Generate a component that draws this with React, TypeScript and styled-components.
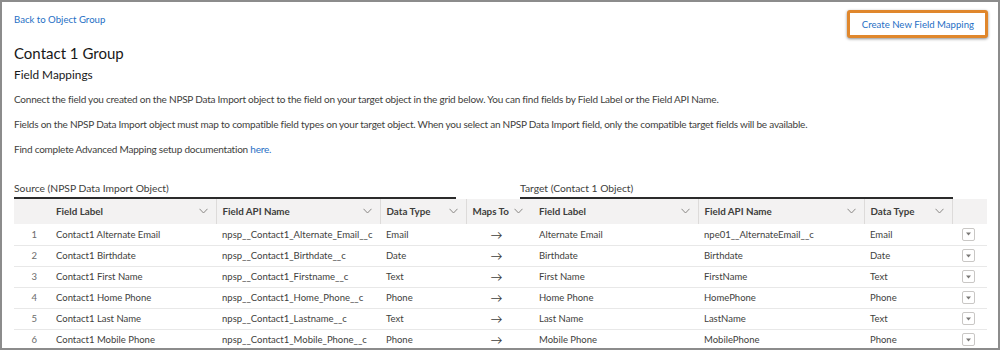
import React from "react";
import styled, { createGlobalStyle } from "styled-components";

const Global = createGlobalStyle`
  html, body { margin: 0; padding: 0; background: #fff; }
  body { font-family: Lato, "Open Sans", "Liberation Sans", sans-serif; }
`;

const Frame = styled.div`
  box-sizing: border-box;
  width: 1000px;
  height: 350px;
  border: 2px solid #8c8c8c;
  overflow: hidden;
  padding: 0 10px 0 12px;
  color: #3e3e3c;
`;

const TopBar = styled.div`
  display: flex;
  justify-content: space-between;
  align-items: flex-start;
  padding-top: 8px;
`;

const Link = styled.a`
  color: #1f6fc5;
  text-decoration: none;
  font-size: 9.6px;
  cursor: pointer;
`;

const BackLink = styled(Link)`
  margin-top: 4px;
`;

const InlineLink = styled(Link)`
  font-size: inherit;
`;

const CreateButton = styled.button`
  box-sizing: border-box;
  height: 28px;
  padding: 0 11px 0 12px;
  background: #fff;
  border: 3px solid #e0872c;
  border-radius: 3px;
  box-shadow: 0 1px 3px rgba(0, 0, 0, 0.45);
  color: #1f6fc5;
  font-family: inherit;
  font-size: 9.6px;
`;

const Title = styled.h1`
  margin: 5px 0 0 0;
  font-size: 15px;
  font-weight: 400;
  color: #181818;
  line-height: 20px;
`;

const Subtitle = styled.h2`
  margin: 3px 0 0 0;
  font-size: 11.8px;
  font-weight: 400;
  color: #181818;
  line-height: 18px;
`;

const Para = styled.p`
  margin: 0;
  font-size: 10px;
  letter-spacing: -0.22px;
  line-height: 25px;
  color: #3e3e3c;
`;

const Paras = styled.div`
  margin-top: 3px;
`;

const SectionRow = styled.div`
  display: flex;
  margin-top: 18px;
  width: 973px;
`;

const SectionLabel = styled.div<{ $w: number; $gap?: number }>`
  width: ${(p) => p.$w}px;
  margin-left: ${(p) => p.$gap ?? 0}px;
  font-size: 10.3px;
  line-height: 17px;
  color: #3e3e3c;
  border-bottom: 2px solid #2b2b2b;
  box-sizing: border-box;
`;

const Table = styled.table`
  width: 973px;
  border-collapse: collapse;
  table-layout: fixed;
`;

const Th = styled.th<{ $border?: boolean }>`
  height: 25px;
  padding: 0 0 1px 6px;
  background: #f3f2f2;
  text-align: left;
  font-size: 9.8px;
  font-weight: 700;
  color: #3e3e3c;
  border-right: ${(p) => (p.$border ? "1px solid #dddbda" : "none")};
  box-sizing: border-box;
  white-space: nowrap;
`;

const HeadInner = styled.div<{ $inline?: boolean }>`
  display: flex;
  align-items: center;
  justify-content: ${(p) => (p.$inline ? "flex-start" : "space-between")};
  gap: 5px;
  padding-right: 8px;
`;

const Td = styled.td<{ $center?: boolean }>`
  height: 21px;
  padding: 0 0 0 6px;
  font-size: 9.5px;
  color: #3e3e3c;
  text-align: ${(p) => (p.$center ? "center" : "left")};
  border-bottom: 1px solid #e8e8e8;
  white-space: nowrap;
  overflow: hidden;
  box-sizing: border-box;
`;

const NumTd = styled(Td)`
  text-align: right;
  padding: 0 13px 0 0;
  color: #6b6b6b;
`;

const ActionTd = styled(Td)`
  text-align: center;
  padding: 0 2px 0 0;
`;

const Arrow = styled.span`
  font-size: 12px;
  color: #3e3e3c;
  display: inline-block;
  padding-right: 12px;
`;

const MenuBtn = styled.span`
  display: inline-flex;
  align-items: center;
  justify-content: center;
  width: 13px;
  height: 13px;
  box-sizing: border-box;
  border: 1px solid #c9c7c5;
  border-radius: 2px;
  background: #fff;
  vertical-align: middle;
`;

const Chevron = () => (
  <svg width="9" height="6" viewBox="0 0 9 6">
    <polyline points="0.5,0.8 4.5,5 8.5,0.8" fill="none" stroke="#8a8886" strokeWidth="1" />
  </svg>
);

const Caret = () => (
  <svg width="5" height="4" viewBox="0 0 5 4">
    <polygon points="0,0.5 5,0.5 2.5,3.5" fill="#7a7876" />
  </svg>
);

const rows = [
  ["Contact1 Alternate Email", "npsp__Contact1_Alternate_Email__c", "Email", "Alternate Email", "npe01__AlternateEmail__c", "Email"],
  ["Contact1 Birthdate", "npsp__Contact1_Birthdate__c", "Date", "Birthdate", "Birthdate", "Date"],
  ["Contact1 First Name", "npsp__Contact1_Firstname__c", "Text", "First Name", "FirstName", "Text"],
  ["Contact1 Home Phone", "npsp__Contact1_Home_Phone__c", "Phone", "Home Phone", "HomePhone", "Phone"],
  ["Contact1 Last Name", "npsp__Contact1_Lastname__c", "Text", "Last Name", "LastName", "Text"],
  ["Contact1 Mobile Phone", "npsp__Contact1_Mobile_Phone__c", "Phone", "Mobile Phone", "MobilePhone", "Phone"],
];

const widths = [36, 166, 164, 86, 67, 165, 166, 88, 35];

const headers: { label: string; border: boolean; chevron: boolean; inline?: boolean }[] = [
  { label: "", border: false, chevron: false },
  { label: "Field Label", border: true, chevron: true },
  { label: "Field API Name", border: true, chevron: true },
  { label: "Data Type", border: true, chevron: true },
  { label: "Maps To", border: false, chevron: true, inline: true },
  { label: "Field Label", border: true, chevron: true },
  { label: "Field API Name", border: true, chevron: true },
  { label: "Data Type", border: true, chevron: true },
  { label: "", border: false, chevron: false },
];

export default function App() {
  return (
    <>
      <Global />
      <Frame>
        <TopBar>
          <BackLink>Back to Object Group</BackLink>
          <CreateButton>Create New Field Mapping</CreateButton>
        </TopBar>
        <Title>Contact 1 Group</Title>
        <Subtitle>Field Mappings</Subtitle>
        <Paras>
          <Para>
            Connect the field you created on the NPSP Data Import object to the field on your target object in the grid below. You can find fields by Field Label or the Field API Name.
          </Para>
          <Para>
            Fields on the NPSP Data Import object must map to compatible field types on your target object. When you select an NPSP Data Import field, only the compatible target fields will be available.
          </Para>
          <Para>
            Find complete Advanced Mapping setup documentation <InlineLink>here.</InlineLink>
          </Para>
        </Paras>
        <SectionRow>
          <SectionLabel $w={442}>Source (NPSP Data Import Object)</SectionLabel>
          <SectionLabel $w={433} $gap={64}>Target (Contact 1 Object)</SectionLabel>
        </SectionRow>
        <Table>
          <colgroup>
            {widths.map((w, i) => (
              <col key={i} style={{ width: w }} />
            ))}
          </colgroup>
          <thead>
            <tr>
              {headers.map((h, i) => (
                <Th key={i} $border={h.border}>
                  {h.label && (
                    <HeadInner $inline={h.inline}>
                      <span>{h.label}</span>
                      {h.chevron && <Chevron />}
                    </HeadInner>
                  )}
                </Th>
              ))}
            </tr>
          </thead>
          <tbody>
            {rows.map((r, i) => (
              <tr key={i}>
                <NumTd>{i + 1}</NumTd>
                <Td>{r[0]}</Td>
                <Td>{r[1]}</Td>
                <Td>{r[2]}</Td>
                <Td $center>
                  <Arrow>→</Arrow>
                </Td>
                <Td>{r[3]}</Td>
                <Td>{r[4]}</Td>
                <Td>{r[5]}</Td>
                <ActionTd>
                  <MenuBtn>
                    <Caret />
                  </MenuBtn>
                </ActionTd>
              </tr>
            ))}
          </tbody>
        </Table>
      </Frame>
    </>
  );
}
